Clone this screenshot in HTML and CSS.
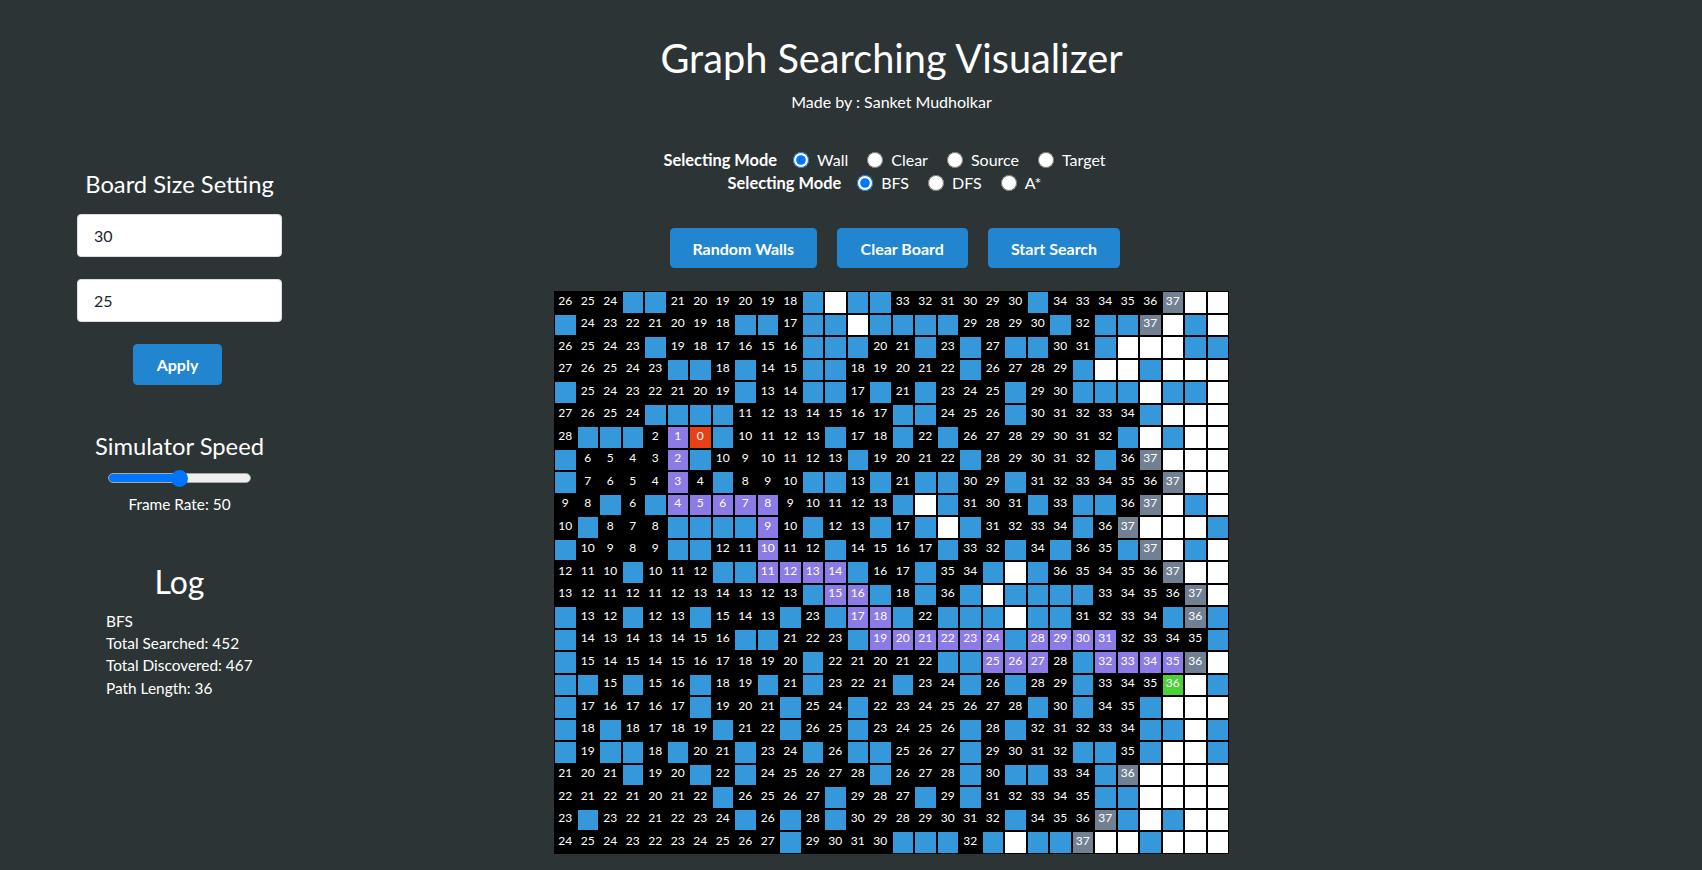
FILE: index.html
```html
<!DOCTYPE html>
<html lang="en">
<head>
<meta charset="utf-8">
<title>Graph Searching Visualizer</title>
<link rel="stylesheet" href="styles.css">
</head>
<body>
<div class="page">
  <aside class="sidebar">
    <h4 class="side-title">Board Size Setting</h4>
    <input class="size-input" type="text" value="30">
    <input class="size-input" type="text" value="25">
    <button class="btn btn-apply">Apply</button>
    <h4 class="side-title speed-title">Simulator Speed</h4>
    <input class="speed" type="range" min="0" max="100" value="50">
    <div class="frame-rate">Frame Rate: 50</div>
    <h2 class="log-title">Log</h2>
    <div class="log-list">
      <div>BFS</div>
      <div>Total Searched: 452</div>
      <div>Total Discovered: 467</div>
      <div>Path Length: 36</div>
    </div>
  </aside>
  <main class="main">
    <h1 class="title">Graph Searching Visualizer</h1>
    <div class="subtitle">Made by : Sanket Mudholkar</div>
    <div class="modes">
      <div class="mode-row">
        <b class="mode-label">Selecting Mode</b>
        <label class="opt"><input type="radio" name="sel" checked>Wall</label>
        <label class="opt"><input type="radio" name="sel">Clear</label>
        <label class="opt"><input type="radio" name="sel">Source</label>
        <label class="opt"><input type="radio" name="sel">Target</label>
      </div>
      <div class="mode-row">
        <b class="mode-label">Selecting Mode</b>
        <label class="opt"><input type="radio" name="alg" checked>BFS</label>
        <label class="opt"><input type="radio" name="alg">DFS</label>
        <label class="opt"><input type="radio" name="alg">A*</label>
      </div>
    </div>
    <div class="actions">
      <button class="btn btn-random">Random Walls</button>
      <button class="btn">Clear Board</button>
      <button class="btn btn-start">Start Search</button>
    </div>
    <div class="board" id="board"></div>
  </main>
</div>
<script src="script.js"></script>
</body>
</html>
```

FILE: styles.css
```css
* { box-sizing: border-box; }
html, body { margin: 0; padding: 0; }
body {
  background: #2d3436;
  color: #fff;
  font-family: Lato, "Liberation Sans", sans-serif;
  font-size: 16px;
  line-height: 24px;
  height: 870px;
  overflow: hidden;
}
.page {
  display: grid;
  grid-template-columns: 359px 1065px 1fr;
}
.sidebar {
  display: flex;
  flex-direction: column;
  align-items: center;
  padding-top: 170px;
}
.side-title {
  margin: 0;
  font-size: 23.75px;
  font-weight: 400;
  line-height: 29px;
}
.size-input {
  display: block;
  width: 205px;
  height: 43px;
  margin-top: 15px;
  padding: 0 16px 1px;
  border: 1px solid #dedede;
  border-radius: 4px;
  background: #fff;
  color: #212529;
  font: 400 16px Lato, "Liberation Sans", sans-serif;
}
.size-input + .size-input { margin-top: 22px; }
.btn {
  height: 40px;
  padding: 0 24px;
  border: 0;
  border-radius: 4.5px;
  background: #2185d0;
  color: #fff;
  font: 700 16px Lato, "Liberation Sans", sans-serif;
}
.btn-random { padding: 0 22.5px; }
.btn-start { padding: 0 23px; }
.btn-apply {
  height: 41px;
  margin: 22px 4px 0 0;
}
.speed-title { margin-top: 46.5px; }
.speed {
  display: block;
  width: 143px;
  height: 10px;
  margin: 12.5px 0 4px;
  border: 1px solid #a8a8a8;
  border-radius: 5px;
  background: linear-gradient(to right, #0075ff 50%, #efefef 50%);
  appearance: none;
  -webkit-appearance: none;
}
.speed::-webkit-slider-thumb {
  width: 17px;
  height: 17px;
  border-radius: 50%;
  background: #0075ff;
  appearance: none;
  -webkit-appearance: none;
}
.frame-rate {
  margin-top: 5px;
  font-size: 15.4px;
}
.log-title {
  margin: 45.5px 0 0;
  font-size: 32px;
  font-weight: 400;
  line-height: 40px;
}
.log-list {
  align-self: flex-start;
  margin: 8px 0 0 106px;
  font-size: 15.4px;
  line-height: 22.4px;
}
.main {
  display: flex;
  flex-direction: column;
  align-items: center;
}
.title {
  margin: 34px 0 0;
  font-size: 39.7px;
  font-weight: 400;
  line-height: 48px;
}
.subtitle { margin-top: 7.5px; }
.modes { margin-top: 34.5px; }
.mode-row {
  display: flex;
  justify-content: center;
  align-items: center;
  height: 23px;
  padding-right: 14px;
}
.mode-label {
  margin-right: 16px;
  font-size: 16.4px;
}
.opt {
  display: flex;
  align-items: center;
  margin-right: 19px;
}
.opt:last-child { margin-right: 0; }
.opt input {
  width: 16px;
  height: 16px;
  margin: 0 8px 0 0;
  accent-color: #0075ff;
}
.actions {
  display: flex;
  gap: 20px;
  margin-top: 34px;
  padding-left: 7px;
}
.board {
  display: grid;
  grid-template-columns: repeat(30, 20.5px);
  grid-auto-rows: 20.5px;
  gap: 2px;
  width: 675px;
  margin-top: 23px;
  padding: 1px;
  background: #000;
}
.cell {
  display: flex;
  align-items: center;
  justify-content: center;
  padding-bottom: 3px;
  font-size: 12px;
  line-height: 1;
  color: #fff;
}
.wall { background: #3498db; }
.empty { background: #fff; }
.path { background: #8c7ae6; }
.edge { background: #718093; }
.source { background: #e84118; }
.target { background: #4cd137; }
```

FILE: script.js
```js
var rows = [
"26 25 24 W W 21 20 19 20 19 18 W _ W W 33 32 31 30 29 30 W 34 33 34 35 36 g37 _ _",
"W 24 23 22 21 20 19 18 W W 17 W W _ W W W W 29 28 29 30 W 32 W W g37 _ W _",
"26 25 24 23 W 19 18 17 16 15 16 W W W 20 21 W 23 W 27 W W 30 31 W _ _ _ W W",
"27 26 25 24 23 W W 18 W 14 15 W W 18 19 20 21 22 W 26 27 28 29 W _ _ W _ _ _",
"W 25 24 23 22 21 20 19 W 13 14 W W 17 W 21 W 23 24 25 W 29 30 W W W _ W W _",
"27 26 25 24 W W W W 11 12 13 14 15 16 17 W W 24 25 26 W 30 31 32 33 34 W _ _ _",
"28 W W W 2 p1 s0 W 10 11 12 13 W 17 18 W 22 W 26 27 28 29 30 31 32 W _ W _ _",
"W 6 5 4 3 p2 W 10 9 10 11 12 13 W 19 20 21 22 W 28 29 30 31 32 W 36 g37 _ _ _",
"W 7 6 5 4 p3 4 W 8 9 10 W W 13 W 21 W W 30 29 W 31 32 33 34 35 36 g37 _ _",
"9 8 W 6 W p4 p5 p6 p7 p8 9 10 11 12 13 W _ W 31 30 31 W 33 W W 36 g37 _ W _",
"10 W 8 7 8 W W W W p9 10 W 12 13 W 17 W _ W 31 32 33 34 W 36 g37 _ _ _ W",
"W 10 9 8 9 W W 12 11 p10 11 12 W 14 15 16 17 W 33 32 W 34 W 36 35 W g37 _ W _",
"12 11 10 W 10 11 12 W W p11 p12 p13 p14 W 16 17 W 35 34 W _ W 36 35 34 35 36 g37 _ _",
"13 12 11 12 11 12 13 14 13 12 13 W p15 p16 W 18 W 36 W _ W W W W 33 34 35 36 g37 _",
"W 13 12 W 12 13 W 15 14 13 W 23 W p17 p18 W 22 W W W _ W W 31 32 33 34 W g36 W",
"W 14 13 14 13 14 15 16 W W 21 22 23 W p19 p20 p21 p22 p23 p24 W p28 p29 p30 p31 32 33 34 35 W",
"W 15 14 15 14 15 16 17 18 19 20 W 22 21 20 21 22 W W p25 p26 p27 28 W p32 p33 p34 p35 g36 _",
"W W 15 W 15 16 W 18 19 W 21 W 23 22 21 W 23 24 W 26 W 28 29 W 33 34 35 t36 _ W",
"W 17 16 17 16 17 W 19 20 21 W 25 24 W 22 23 24 25 26 27 28 W 30 W 34 35 W _ _ _",
"W 18 W 18 17 18 19 W 21 22 W 26 25 W 23 24 25 26 W 28 W 32 31 32 33 34 W W _ W",
"W 19 W W 18 W 20 21 W 23 24 W 26 W W 25 26 27 W 29 30 31 32 W W 35 W _ _ W",
"21 20 21 W 19 20 W 22 W 24 25 26 27 28 W 26 27 28 W 30 W W 33 34 W g36 _ _ _ _",
"22 21 22 21 20 21 22 W 26 25 26 27 W 29 28 27 W 29 W 31 32 33 34 35 W W _ _ _ _",
"23 W 23 22 21 22 23 24 W 26 W 28 W 30 29 28 29 30 31 32 W 34 35 36 g37 W _ W _ _",
"24 25 24 23 22 23 24 25 26 27 W 29 30 31 30 W W W 32 W _ W W g37 _ _ W _ _ _"
];
var kinds = { W: "wall", _: "empty", p: "path", g: "edge", s: "source", t: "target" };
var board = document.getElementById("board");
rows.forEach(function (row) {
  row.split(" ").forEach(function (tok) {
    var cell = document.createElement("div");
    var kind = kinds[tok[0]];
    cell.className = kind ? "cell " + kind : "cell";
    var text = tok.replace(/^[a-zA-Z_]/, "");
    if (text) cell.textContent = text;
    board.appendChild(cell);
  });
});
```
